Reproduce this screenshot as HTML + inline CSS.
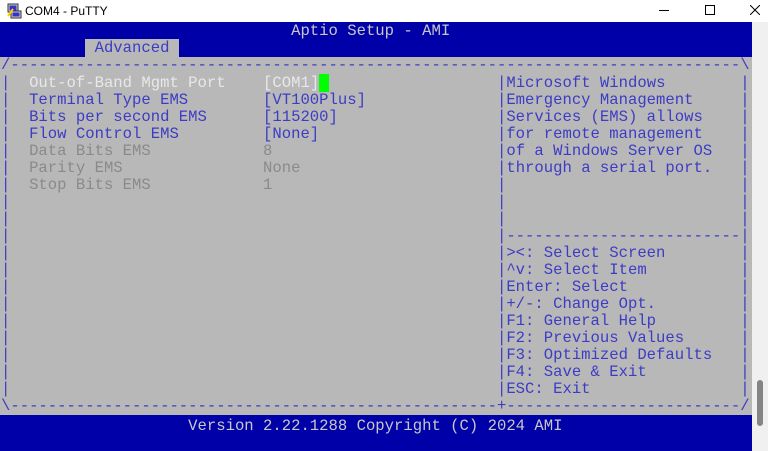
<!DOCTYPE html>
<html><head><style>
body{margin:0;width:768px;height:451px;overflow:hidden;background:#fff;position:relative;font-family:"Liberation Sans",sans-serif}
.tb{position:absolute;left:0;top:0;width:768px;height:22px;background:#fff;font-size:12px}
.term{position:absolute;left:0;top:22px;width:752px;height:429px;background:#0000a8;}
.gb{position:absolute;left:0;top:57px;width:752px;height:358px;background:#b8b8b8}
.sb{position:absolute;left:752px;top:22px;width:16px;height:429px;background:#f0f0f0}
.row{position:absolute;left:0;width:752px;height:17px;padding-left:1px;box-sizing:border-box;font:15.6px/17px "Liberation Mono",monospace;white-space:pre;color:#3c3cc4}
.b{color:#c8c8c8}
.w{color:#e8e8e8}.d{color:#8a8a8a}
.tab{background:#b8b8b8;color:#3c3cc4}
.cur{background:#00ff00}
</style></head><body>
<div class="tb">
<svg style="position:absolute;left:7px;top:3px" width="16" height="16" viewBox="0 0 16 16"><rect x="1" y="1" width="10" height="8" fill="#ccc" stroke="#333"/><rect x="2.5" y="2.5" width="7" height="5" fill="#33c"/><rect x="4" y="8" width="10" height="7" fill="#ccc" stroke="#333"/><rect x="5.5" y="9.5" width="7" height="4" fill="#33c"/><path d="M1 13 L6 6" stroke="#fc0" stroke-width="2"/></svg>
<span style="position:absolute;left:25px;top:4px;color:#000">COM4 - PuTTY</span>
<div style="position:absolute;left:659px;top:10px;width:10px;height:1px;background:#000"></div>
<div style="position:absolute;left:705px;top:5px;width:8px;height:8px;border:1px solid #000"></div>
<svg style="position:absolute;left:750px;top:5px" width="10" height="10"><path d="M0 0L10 10M10 0L0 10" stroke="#000" stroke-width="1"/></svg>
</div>
<div class="term"></div>
<div class="gb"></div>
<div class="sb"><div style="position:absolute;left:5px;top:358px;width:6px;height:46px;background:#858585;border-radius:3px"></div></div>
<div class="row b" style="top:23px">                               Aptio Setup - AMI</div>
<div class="row b" style="top:40px">         <span class="tab"> Advanced </span></div>
<div class="row" style="top:57px">/------------------------------------------------------------------------------\</div>
<div class="row" style="top:75px">|  <span class="w">Out-of-Band Mgmt Port</span>    <span class="w">[COM1]</span><span class="cur"> </span>                  |Microsoft Windows        |</div>
<div class="row" style="top:92px">|  Terminal Type EMS        [VT100Plus]              |Emergency Management     |</div>
<div class="row" style="top:109px">|  Bits per second EMS      [115200]                 |Services (EMS) allows    |</div>
<div class="row" style="top:126px">|  Flow Control EMS         [None]                   |for remote management    |</div>
<div class="row" style="top:143px">|  <span class="d">Data Bits EMS            8</span>                        |of a Windows Server OS   |</div>
<div class="row" style="top:160px">|  <span class="d">Parity EMS               None</span>                     |through a serial port.   |</div>
<div class="row" style="top:177px">|  <span class="d">Stop Bits EMS            1</span>                        |                         |</div>
<div class="row" style="top:194px">|                                                    |                         |</div>
<div class="row" style="top:211px">|                                                    |                         |</div>
<div class="row" style="top:228px">|                                                    |-------------------------|</div>
<div class="row" style="top:245px">|                                                    |&gt;&lt;: Select Screen        |</div>
<div class="row" style="top:262px">|                                                    |^v: Select Item          |</div>
<div class="row" style="top:279px">|                                                    |Enter: Select            |</div>
<div class="row" style="top:296px">|                                                    |+/-: Change Opt.         |</div>
<div class="row" style="top:313px">|                                                    |F1: General Help         |</div>
<div class="row" style="top:330px">|                                                    |F2: Previous Values      |</div>
<div class="row" style="top:347px">|                                                    |F3: Optimized Defaults   |</div>
<div class="row" style="top:364px">|                                                    |F4: Save &amp; Exit          |</div>
<div class="row" style="top:381px">|                                                    |ESC: Exit                |</div>
<div class="row" style="top:398px">\----------------------------------------------------+-------------------------/</div>
<div class="row b" style="top:418px">                    Version 2.22.1288 Copyright (C) 2024 AMI</div>
</body></html>
